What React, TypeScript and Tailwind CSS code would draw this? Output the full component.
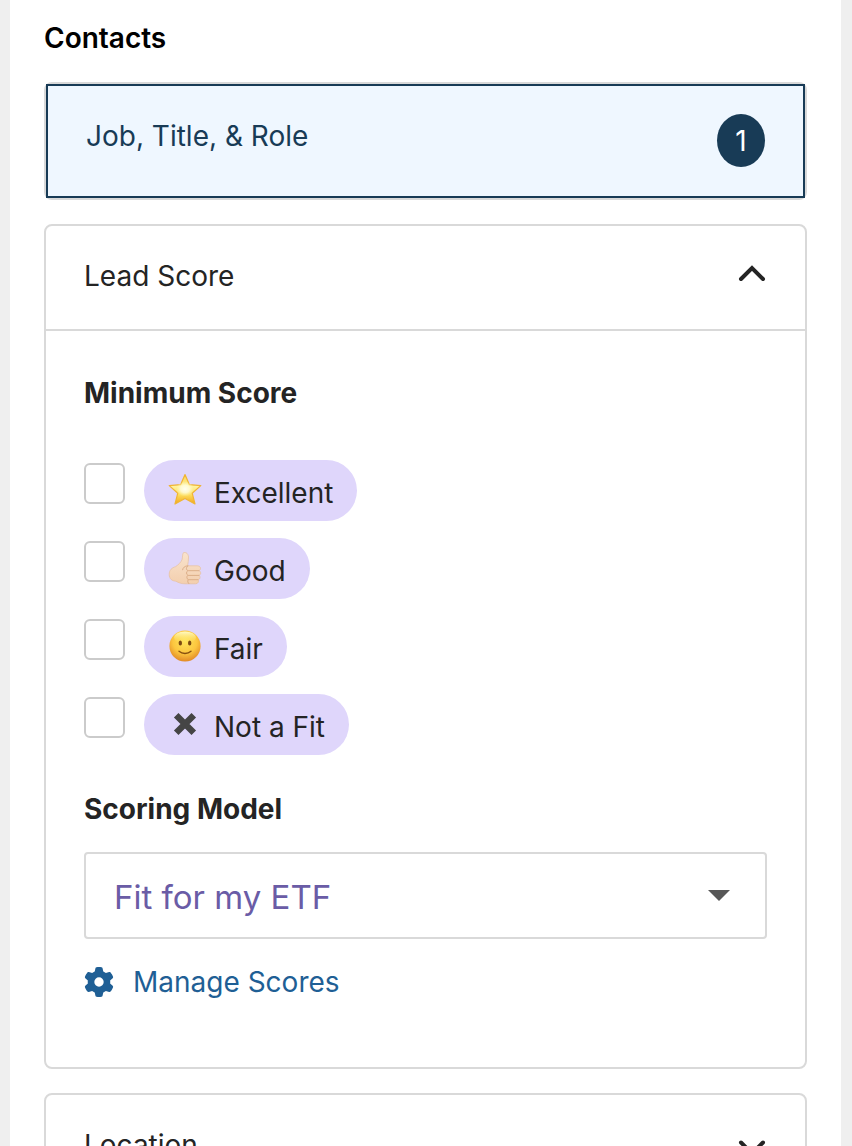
import { useState, type ReactNode } from 'react';
import { FaGear } from 'react-icons/fa6';

function StarIcon() {
  return (
    <svg viewBox="0 0 34 34" className="size-[34px]" aria-hidden="true">
      <defs>
        <linearGradient id="star-fill" x1="0" y1="0" x2="0" y2="1">
          <stop offset="0" stopColor="#fbd44c" />
          <stop offset="0.4" stopColor="#fff3a0" />
          <stop offset="0.7" stopColor="#fddc5a" />
          <stop offset="1" stopColor="#f2a51a" />
        </linearGradient>
        <radialGradient id="star-glow">
          <stop offset="0" stopColor="#fffff0" />
          <stop offset="0.5" stopColor="#fffde0" stopOpacity="0.8" />
          <stop offset="1" stopColor="#fff7b0" stopOpacity="0" />
        </radialGradient>
      </defs>
      <path
        d="M17 .6 21.400 10.700 32.800 11.600 24.200 19.200 27 30 17 24.400 7 30 9.800 19.200 1.200 11.600 12.600 10.700Z"
        fill="url(#star-fill)"
        stroke="#f0b535"
        strokeWidth="1.200"
        strokeLinejoin="round"
      />
      <ellipse cx="17" cy="15" rx="9" ry="7.500" fill="url(#star-glow)" />
    </svg>
  );
}

function ThumbIcon() {
  return (
    <svg viewBox="0 0 34 34" className="size-[34px]" aria-hidden="true">
      <defs>
        <linearGradient id="thumb-fill" x1="0" y1="0" x2="0" y2="1">
          <stop offset="0" stopColor="#f9e3cd" />
          <stop offset="1" stopColor="#f3cfae" />
        </linearGradient>
      </defs>
      <path
        d="M15.600.6c2.700-.6 4.700 1.200 4.900 4.400.1 2.900-.4 5.700-.9 8.800h9.900c3.600 0 3.900 4.200 1.400 4.900 2.500.7 2.300 4.200 0 4.700 1.800.9 1.400 3.900-.8 4.300 1 1.700 0 4.100-2.500 4.100H17c-4.200 0-6.700-1.400-9.200-2.600C4 29 1.200 26.800 1.200 22.500c0-4.600 2.800-6.800 6.300-7.800 3-2 5.400-4.300 6.500-7 .7-1.900.2-6 1.600-7.100z"
        fill="url(#thumb-fill)"
        stroke="#e6c09d"
        strokeWidth="0.700"
      />
      <path
        d="M19.600 13.800c-3 .3-4.600 1.800-5 4M20.500 18.700h10.400M20.500 23.400h10.400M20.500 27.700h9.500M20 14c-2.200 1.100-2 3.900-.1 4.600-1.800.9-1.800 3.900 0 4.700-1.400.9-1.400 3.500.3 4.400-.8 1.200-.5 3.100.7 4"
        fill="none"
        stroke="#dcae88"
        strokeWidth="1"
        strokeLinecap="round"
      />
    </svg>
  );
}

function SmileIcon() {
  return (
    <svg viewBox="0 0 34 34" className="size-[34px]" aria-hidden="true">
      <defs>
        <radialGradient id="smile-fill" cx="0.5" cy="0.35" r="0.65">
          <stop offset="0" stopColor="#ffe55a" />
          <stop offset="0.6" stopColor="#fcc63f" />
          <stop offset="1" stopColor="#e28a26" />
        </radialGradient>
        <linearGradient id="smile-shine" x1="0" y1="0" x2="0" y2="1">
          <stop offset="0" stopColor="#fffbc8" />
          <stop offset="1" stopColor="#ffe55a" stopOpacity="0" />
        </linearGradient>
      </defs>
      <circle cx="17" cy="16" r="15.600" fill="url(#smile-fill)" />
      <ellipse cx="17" cy="7.500" rx="11" ry="6" fill="url(#smile-shine)" />
      <ellipse cx="12.300" cy="13" rx="1.700" ry="2.500" fill="#7b4a12" />
      <ellipse cx="21.700" cy="13" rx="1.700" ry="2.500" fill="#7b4a12" />
      <path d="M11 21.300c3.400 3 8.600 3 12 0" fill="none" stroke="#87500f" strokeWidth="1.400" strokeLinecap="round" />
    </svg>
  );
}

function CrossIcon() {
  return (
    <svg viewBox="0 0 34 34" className="size-[34px]" aria-hidden="true">
      <path d="M8.200 7.200 25.800 24.800M25.800 7.200 8.200 24.800" stroke="#454545" strokeWidth="6.400" />
    </svg>
  );
}

function Chevron({ up = false }: { up?: boolean }) {
  return (
    <svg viewBox="0 0 28 24" className="h-6 w-7" fill="none" aria-hidden="true">
      <path d={up ? 'M3 15 14 4 25 15' : 'M3 9.500 14 20.500 25 9.500'} stroke="#242424" strokeWidth="4" strokeLinecap="round" />
    </svg>
  );
}

const scores: { label: string; icon: ReactNode }[] = [
  { label: 'Excellent', icon: <StarIcon /> },
  { label: 'Good', icon: <ThumbIcon /> },
  { label: 'Fair', icon: <SmileIcon /> },
  { label: 'Not a Fit', icon: <CrossIcon /> },
];

export default function App() {
  const [open, setOpen] = useState(true);

  return (
    <div className="h-screen overflow-hidden bg-[#efefef] pr-[11px] pl-[10px] font-['Inter','Liberation_Sans',sans-serif] text-[28px] leading-10 text-[#242424]">
      <main className="min-h-full bg-white px-[34px]">
        <h2 className="pt-[18px] font-semibold text-black">Contacts</h2>

        <div className="mt-6 rounded-lg border-2 border-[#d9d9d9] bg-[#d9d9d9]">
          <button type="button" className="flex h-[114px] w-full items-start justify-between border-2 border-[#183b56] bg-[#eff7ff] px-[38px] pt-7 text-left text-[#183b56]">
            <span className="pt-0.5">Job, Title, &amp; Role</span>
            <span className="grid h-[53px] w-12 place-items-center rounded-[50%] bg-[#183b56] text-white">1</span>
          </button>
        </div>

        <section className="mt-6 rounded-lg border-2 border-[#d9d9d9]">
          <button type="button" aria-expanded={open} onClick={() => setOpen(!open)} className="flex h-[103px] w-full items-center justify-between pr-[39px] pb-1 pl-[38px] text-left">
            <span>Lead Score</span>
            <Chevron up={open} />
          </button>

          {open && (
            <div className="border-t-2 border-[#d9d9d9] px-[38px] pb-[65px]">
              <fieldset>
                <legend className="pt-[42px] font-bold">Minimum Score</legend>
                <div className="mt-[47px] flex flex-col gap-[17px]">
                  {scores.map((score) => (
                    <label key={score.label} className="flex items-start gap-[19px]">
                      <input type="checkbox" className="mt-[3px] size-[41px] shrink-0 appearance-none rounded-md border-2 border-[#cbcbcb] bg-white checked:bg-[#183b56]" />
                      <span className="flex h-[61px] items-center gap-3 rounded-full bg-[#dfd6fb] px-6">
                        {score.icon}
                        <span className="pt-1">{score.label}</span>
                      </span>
                    </label>
                  ))}
                </div>
              </fieldset>

              <label htmlFor="scoring-model" className="mt-[34px] block font-bold">
                Scoring Model
              </label>
              <div className="relative mt-[23px]">
                <select id="scoring-model" className="h-[87px] w-full appearance-none rounded border-2 border-[#d9d9d9] bg-white pt-0.5 pr-20 pl-7 text-[33px] text-[#6a5ca6]">
                  <option>Fit for my ETF</option>
                </select>
                <svg viewBox="0 0 22 11" className="pointer-events-none absolute top-[38px] right-[37px] h-[11px] w-[22px]" aria-hidden="true">
                  <path d="M0 0h22L11 11z" fill="#575757" />
                </svg>
              </div>

              <a href="#scores" className="mt-[23px] flex items-center gap-[19px] text-[#1f5f95]">
                <FaGear className="size-[30px]" />
                Manage Scores
              </a>
            </div>
          )}
        </section>

        <section className="mt-6 rounded-lg border-2 border-[#d9d9d9]">
          <button type="button" aria-expanded={false} className="flex h-[103px] w-full items-center justify-between pr-[39px] pb-1 pl-[38px] text-left">
            <span>Location</span>
            <Chevron />
          </button>
        </section>
      </main>
    </div>
  );
}
